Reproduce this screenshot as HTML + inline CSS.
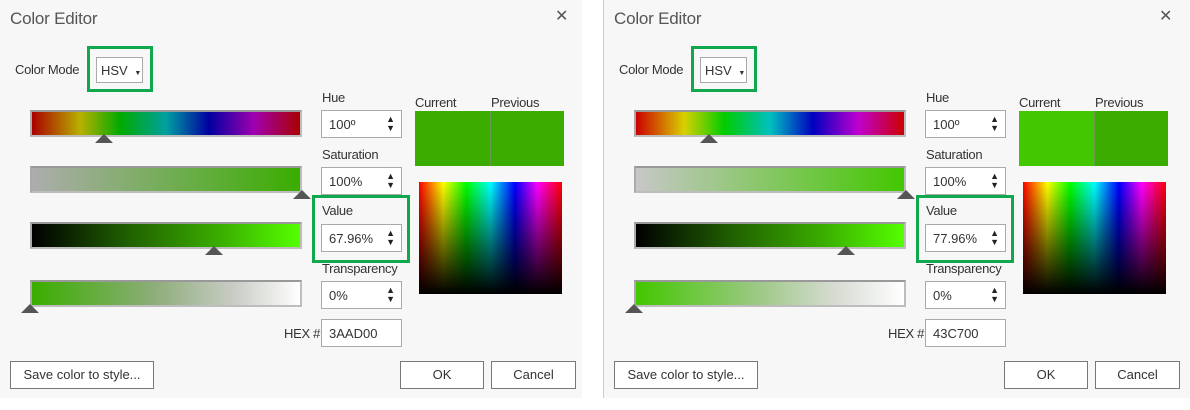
<!DOCTYPE html>
<html><head><style>
*{box-sizing:border-box;margin:0;padding:0}
body{width:1190px;height:410px;background:#fff;position:relative;overflow:hidden;font-family:"Liberation Sans",sans-serif;color:#333}
.p{position:absolute;top:0;width:582px;height:398px;background:#f7f7f7}
.a{position:absolute}
.t{font-size:17px;color:#555;left:10px;top:9px;letter-spacing:-0.2px}
.x{left:555px;top:6px;font-size:16px;color:#555}
.l{font-size:13px;color:#333;letter-spacing:-0.3px}
.bar{position:absolute;left:30px;width:272px;height:27px;border:2px solid #bdbdbd;border-top-color:#999;border-left-color:#aaa}
.th{position:absolute;width:0;height:0;border-left:9px solid transparent;border-right:9px solid transparent;border-bottom:9px solid #555}
.box{position:absolute;left:321px;width:81px;height:28px;background:#fff;border:1px solid #aaa;font-size:13px;padding:6px 0 0 7px}
.sp{position:absolute;right:6px;top:4px;font-size:9px;line-height:9px;color:#222}
.hl{position:absolute;border:3px solid #0fa84f}
.btn{position:absolute;top:361px;height:28px;border:1px solid #777;background:#fff;font-size:13px;text-align:center;line-height:26px}
</style></head><body>

<div class="p" style="left:0">
<div class="a t">Color Editor</div><div class="a x">✕</div>
<div class="a l" style="left:15px;top:62px">Color Mode</div>
<div class="a" style="left:96px;top:57px;width:47px;height:26px;background:#fff;border:1px solid #aaa;font-size:13px;padding:5px 0 0 4px">HSV <span style="font-size:7px;margin-left:3px">▼</span></div>
<div class="hl" style="left:87px;top:46px;width:66px;height:46px"></div>
<div class="bar" style="top:110px;background:linear-gradient(90deg,#a00,#b8b000 18%,#0a0 33%,#00a0a0 50%,#0000a0 66%,#a000b0 83%,#a00)"></div>
<div class="th" style="left:95px;top:134px"></div>
<div class="bar" style="top:166px;background:linear-gradient(90deg,#adadad,#3aad00)"></div>
<div class="th" style="left:293px;top:190px"></div>
<div class="bar" style="top:222px;background:linear-gradient(90deg,#000,#1f5e00 35%,#3aad00 70%,#55ff00)"></div>
<div class="th" style="left:205px;top:246px"></div>
<div class="bar" style="top:280px;background:linear-gradient(90deg,#3aad00,#8cad78 45%,#c8ccc4 75%,#fff)"></div>
<div class="th" style="left:21px;top:304px"></div>
<div class="a l" style="left:322px;top:90px">Hue</div>
<div class="box" style="top:110px">100º<div class="sp">▲<br>▼</div></div>
<div class="a l" style="left:322px;top:147px">Saturation</div>
<div class="box" style="top:167px">100%<div class="sp">▲<br>▼</div></div>
<div class="a l" style="left:322px;top:203px">Value</div>
<div class="box" style="top:224px">67.96%<div class="sp">▲<br>▼</div></div>
<div class="a l" style="left:322px;top:261px">Transparency</div>
<div class="box" style="top:281px">0%<div class="sp">▲<br>▼</div></div>
<div class="hl" style="left:312px;top:195px;width:98px;height:68px"></div>
<div class="a l" style="left:284px;top:326px">HEX #</div>
<div class="box" style="top:319px">3AAD00</div>
<div class="a l" style="left:415px;top:95px">Current</div><div class="a l" style="left:491px;top:95px">Previous</div>
<div class="a" style="left:415px;top:111px;width:75px;height:55px;background:#3aad00"></div>
<div class="a" style="left:490px;top:111px;width:74px;height:55px;background:#3aad00;border-left:1px solid #6a9a50"></div>
<div class="a" style="left:419px;top:182px;width:143px;height:112px;background:linear-gradient(180deg,transparent,#000),linear-gradient(90deg,#f00,#ff0 17%,#0f0 33%,#0ff 50%,#00f 67%,#f0f 83%,#f00)"></div>
<div class="btn" style="left:10px;width:144px">Save color to style...</div>
<div class="btn" style="left:400px;width:84px">OK</div>
<div class="btn" style="left:491px;width:85px">Cancel</div>
</div>

<div class="a" style="left:603px;top:0;width:1px;height:398px;background:#ccc"></div>
<div class="p" style="left:604px;width:586px">
<div class="a t">Color Editor</div><div class="a x">✕</div>
<div class="a l" style="left:15px;top:62px">Color Mode</div>
<div class="a" style="left:96px;top:57px;width:47px;height:26px;background:#fff;border:1px solid #aaa;font-size:13px;padding:5px 0 0 4px">HSV <span style="font-size:7px;margin-left:3px">▼</span></div>
<div class="hl" style="left:87px;top:46px;width:66px;height:46px"></div>
<div class="bar" style="top:110px;background:linear-gradient(90deg,#c00,#d8d000 18%,#0c0 33%,#00c0c0 50%,#0000c0 66%,#c000d0 83%,#c00)"></div>
<div class="th" style="left:96px;top:134px"></div>
<div class="bar" style="top:166px;background:linear-gradient(90deg,#c7c7c7,#43c700)"></div>
<div class="th" style="left:293px;top:190px"></div>
<div class="bar" style="top:222px;background:linear-gradient(90deg,#000,#1f5e00 35%,#3aad00 70%,#55ff00)"></div>
<div class="th" style="left:233px;top:246px"></div>
<div class="bar" style="top:280px;background:linear-gradient(90deg,#43c700,#9cc884 45%,#d8dcd4 75%,#fff)"></div>
<div class="th" style="left:21px;top:304px"></div>
<div class="a l" style="left:322px;top:90px">Hue</div>
<div class="box" style="top:110px">100º<div class="sp">▲<br>▼</div></div>
<div class="a l" style="left:322px;top:147px">Saturation</div>
<div class="box" style="top:167px">100%<div class="sp">▲<br>▼</div></div>
<div class="a l" style="left:322px;top:203px">Value</div>
<div class="box" style="top:224px">77.96%<div class="sp">▲<br>▼</div></div>
<div class="a l" style="left:322px;top:261px">Transparency</div>
<div class="box" style="top:281px">0%<div class="sp">▲<br>▼</div></div>
<div class="hl" style="left:312px;top:195px;width:98px;height:68px"></div>
<div class="a l" style="left:284px;top:326px">HEX #</div>
<div class="box" style="top:319px">43C700</div>
<div class="a l" style="left:415px;top:95px">Current</div><div class="a l" style="left:491px;top:95px">Previous</div>
<div class="a" style="left:415px;top:111px;width:75px;height:55px;background:#43c700"></div>
<div class="a" style="left:490px;top:111px;width:74px;height:55px;background:#3aad00;border-left:1px solid #6a9a50"></div>
<div class="a" style="left:419px;top:182px;width:143px;height:112px;background:linear-gradient(180deg,transparent,#000),linear-gradient(90deg,#f00,#ff0 17%,#0f0 33%,#0ff 50%,#00f 67%,#f0f 83%,#f00)"></div>
<div class="btn" style="left:10px;width:144px">Save color to style...</div>
<div class="btn" style="left:400px;width:84px">OK</div>
<div class="btn" style="left:491px;width:85px">Cancel</div>
</div>
</body></html>
